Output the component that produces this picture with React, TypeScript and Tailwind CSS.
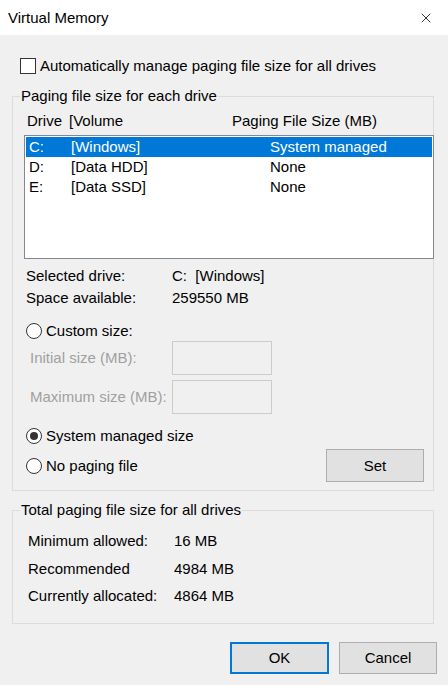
import { X } from 'lucide-react';

const drives = [
  { letter: 'C:', volume: '[Windows]', size: 'System managed', selected: true },
  { letter: 'D:', volume: '[Data HDD]', size: 'None', selected: false },
  { letter: 'E:', volume: '[Data SSD]', size: 'None', selected: false },
];

const totals = [
  { label: 'Minimum allowed:', value: '16 MB' },
  { label: 'Recommended', value: '4984 MB' },
  { label: 'Currently allocated:', value: '4864 MB' },
];

function Radio({ checked, label }: { checked?: boolean; label: string }) {
  return (
    <div className="flex h-[20px] items-center">
      <span className="flex h-[16px] w-[16px] items-center justify-center rounded-full border border-[#333333] bg-white">
        {checked && <span className="h-[8px] w-[8px] rounded-full bg-[#333333]" />}
      </span>
      <span className="ml-[4px]">{label}</span>
    </div>
  );
}

export default function App() {
  return (
    <div
      className="flex h-[685px] w-[448px] flex-col bg-[#f0f0f0] text-[15px] leading-[20px] text-black"
      style={{ fontFamily: '"Liberation Sans", Arial, sans-serif' }}
    >
      <div className="flex h-[35px] items-center justify-between bg-white pl-[8px] pr-[14px]">
        <span>Virtual Memory</span>
        <X className="h-[16px] w-[16px] text-black" strokeWidth={1.2} />
      </div>

      <div className="ml-[20px] mt-[21px] flex h-[20px] items-center">
        <span className="h-[16px] w-[16px] border border-[#333333] bg-white" />
        <span className="ml-[4px]">Automatically manage paging file size for all drives</span>
      </div>

      <fieldset className="ml-[12px] mt-[10px] w-[422px] border border-[#dcdcdc] pb-[8px] pl-[11px]">
        <legend className="ml-[-4px] px-[1px]">Paging file size for each drive</legend>

        <div className="mt-[5px] flex h-[20px] pl-[3px]">
          <span className="w-[42px]">Drive</span>
          <span className="w-[163px]">[Volume</span>
          <span>Paging File Size (MB)</span>
        </div>

        <div className="mr-[-1px] mt-[4px] h-[124px] border border-[#828790] bg-white p-[1px]">
          {drives.map((d) => (
            <div
              key={d.letter}
              className={`flex h-[20px] items-center pl-[3px] ${d.selected ? 'bg-[#0078d7] text-white' : ''}`}
            >
              <span className="w-[42px]">{d.letter}</span>
              <span className="w-[199px]">{d.volume}</span>
              <span>{d.size}</span>
            </div>
          ))}
        </div>

        <div className="mt-[7px] flex h-[20px] pl-[2px]">
          <span className="w-[146px]">Selected drive:</span>
          <span className="whitespace-pre">C:  [Windows]</span>
        </div>
        <div className="mt-[2px] flex h-[20px] pl-[2px]">
          <span className="w-[146px]">Space available:</span>
          <span>259550 MB</span>
        </div>

        <div className="mt-[13px] pl-[2px]">
          <Radio label="Custom size:" />
        </div>

        <div className="flex flex-col gap-[5px] pl-[6px]">
          <div className="flex items-center">
            <span className="w-[142px] text-[#a0a0a0]">Initial size (MB):</span>
            <span className="h-[34px] w-[100px] border border-[#cccccc] bg-[#f0f0f0]" />
          </div>
          <div className="flex items-center">
            <span className="w-[142px] text-[#a0a0a0]">Maximum size (MB):</span>
            <span className="h-[34px] w-[100px] border border-[#cccccc] bg-[#f0f0f0]" />
          </div>
        </div>

        <div className="mt-[12px] pl-[2px]">
          <Radio checked label="System managed size" />
        </div>

        <div className="mt-[3px] flex items-center justify-between pl-[2px] pr-[9px]">
          <Radio label="No paging file" />
          <button className="h-[33px] w-[98px] border border-[#adadad] bg-[#e1e1e1]">Set</button>
        </div>
      </fieldset>

      <fieldset className="ml-[12px] mt-[9px] w-[422px] border border-[#dcdcdc] pb-[17px] pl-[15px]">
        <legend className="ml-[-8px] px-[1px]">Total paging file size for all drives</legend>
        <div className="mt-[11px] flex flex-col gap-[7.5px]">
          {totals.map((t) => (
            <div key={t.label} className="flex h-[20px]">
              <span className="w-[146px]">{t.label}</span>
              <span>{t.value}</span>
            </div>
          ))}
        </div>
      </fieldset>

      <div className="mr-[11px] mt-[18px] flex justify-end gap-[10px]">
        <button className="h-[32px] w-[99px] border-2 border-[#0078d7] bg-[#e1e1e1]">OK</button>
        <button className="h-[32px] w-[98px] border border-[#adadad] bg-[#e1e1e1]">Cancel</button>
      </div>
    </div>
  );
}
